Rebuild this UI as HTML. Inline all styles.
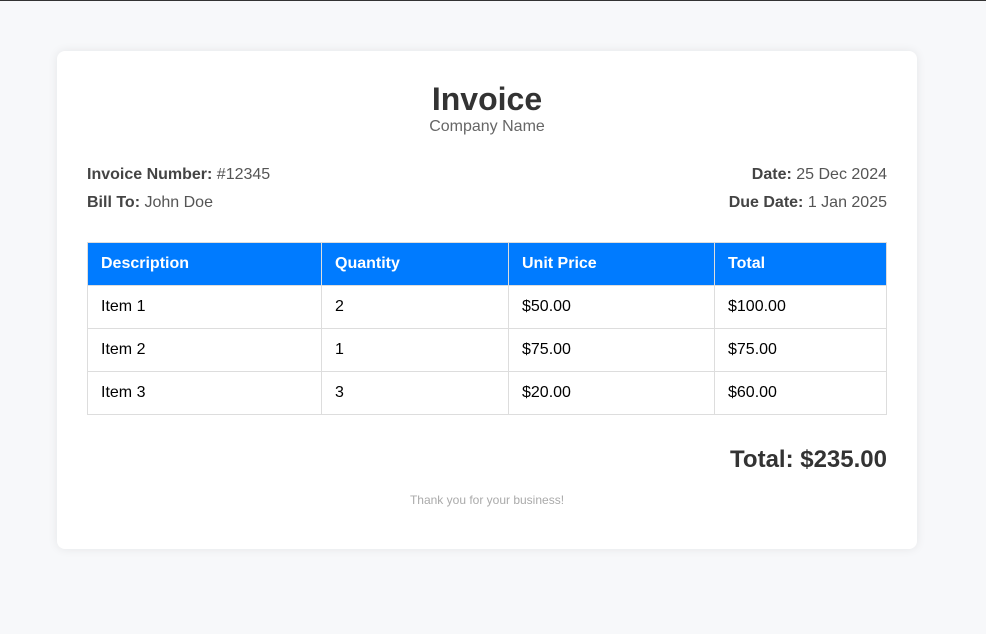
<!DOCTYPE html>
<html><head><style>
html,body{margin:0;padding:0;}
body{width:986px;height:634px;background:#f7f8fa;border-top:1px solid #333;box-sizing:border-box;font-family:"Liberation Sans",Arial,sans-serif;color:#333;position:relative;overflow:hidden;}
.card{position:absolute;left:57px;top:50px;width:860px;height:498px;background:#fff;border-radius:8px;box-shadow:0 0 10px rgba(0,0,0,0.08);}
h1{position:absolute;left:0;right:0;top:30px;margin:0;text-align:center;font-size:32px;font-weight:bold;color:#333;}
.cn{position:absolute;left:0;right:0;top:67px;text-align:center;font-size:16px;color:#666;}
.info{position:absolute;font-size:16px;color:#555;}
.info b{color:#444;}
table{position:absolute;left:30px;top:191px;width:800px;border-collapse:collapse;font-size:16px;}
th,td{border:1px solid #ddd;padding:0 13px;height:42px;text-align:left;}
th{background:#007bff;color:#fff;font-weight:bold;border-color:#ddd;}
td{color:#000;}
.total{position:absolute;right:30px;top:395px;font-size:24px;font-weight:bold;color:#333;}
.ty{position:absolute;left:0;right:0;top:442px;text-align:center;font-size:12px;color:#aaa;}
</style></head><body>
<div class="card">
<h1>Invoice</h1>
<div class="cn">Company Name</div>
<div class="info" style="left:30px;top:115px"><b>Invoice Number:</b> #12345</div>
<div class="info" style="left:30px;top:143px"><b>Bill To:</b> John Doe</div>
<div class="info" style="right:30px;top:115px;text-align:right"><b>Date:</b> 25 Dec 2024</div>
<div class="info" style="right:30px;top:143px;text-align:right"><b>Due Date:</b> 1 Jan 2025</div>
<table>
<tr><th style="width:207px">Description</th><th style="width:160px">Quantity</th><th style="width:179px">Unit Price</th><th>Total</th></tr>
<tr><td>Item 1</td><td>2</td><td>$50.00</td><td>$100.00</td></tr>
<tr><td>Item 2</td><td>1</td><td>$75.00</td><td>$75.00</td></tr>
<tr><td>Item 3</td><td>3</td><td>$20.00</td><td>$60.00</td></tr>
</table>
<div class="total">Total: $235.00</div>
<div class="ty">Thank you for your business!</div>
</div>
</body></html>
